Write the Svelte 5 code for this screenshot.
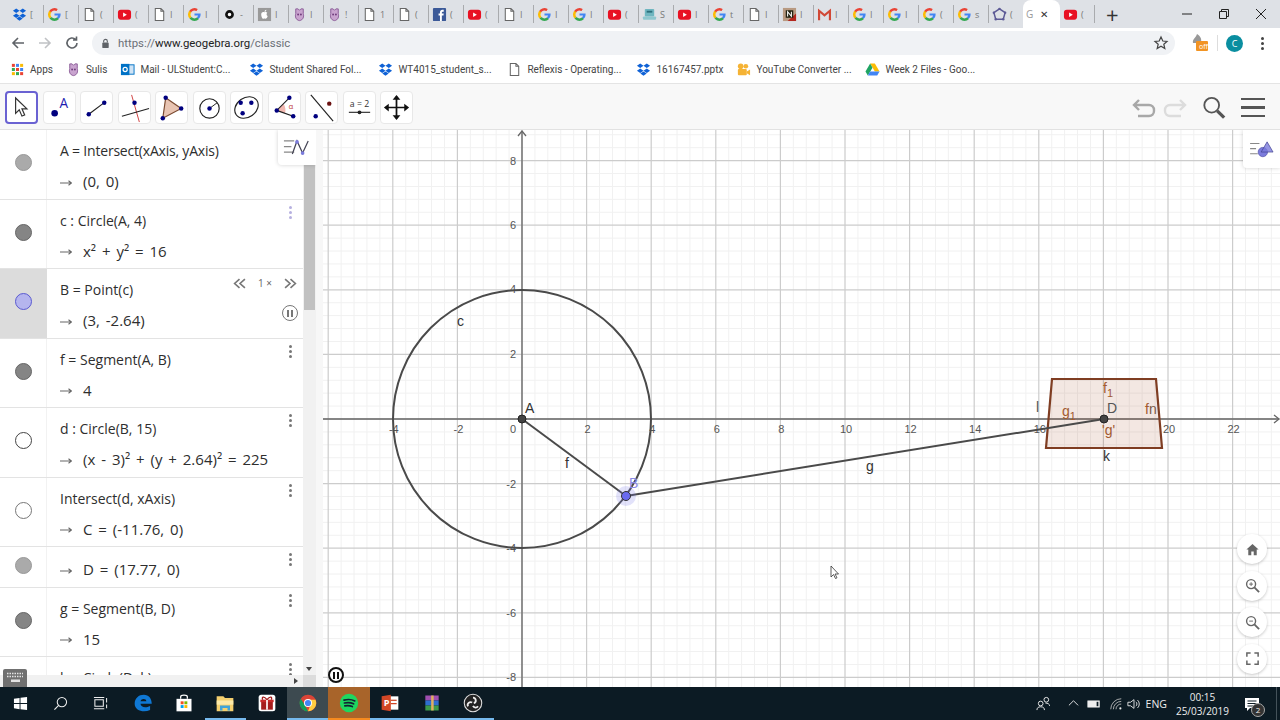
<script lang="ts">
	const tabs = [
		['dropbox', '['], ['g', '['], ['doc', '('], ['yt', '('], ['doc', 'I'], ['g', 'I'], ['dot', '-'], ['apple', 'I'],
		['sulis', 'I'], ['sulis', '!'], ['doc', '1'], ['doc', '('], ['fb', '('], ['yt', '('], ['doc', 'I'], ['g', 'I'],
		['g', 'I'], ['yt', '('], ['laptop', 'S'], ['yt', 'I'], ['g', 't'], ['doc', 'I'], ['notion', 'I'], ['gmail', 'I'],
		['g', 'I'], ['g', 'I'], ['g', '('], ['g', 's'], ['pent', '('], ['g', 'active'], ['yt', '(']
	];

	const bookmarks = [
		['apps', 'Apps'], ['sulis', 'Sulis'], ['outlook', 'Mail - ULStudent:C...'], ['dropbox', 'Student Shared Fol...'],
		['dropbox', 'WT4015_student_s...'], ['doc', 'Reflexis - Operating...'], ['dropbox', '16167457.pptx'],
		['film', 'YouTube Converter ...'], ['drive', 'Week 2 Files - Goo...']
	];

	const rows = [
		{ fill: '#aaa', line: '#999', def: 'A = Intersect(xAxis, yAxis)', val: '(0, 0)', menu: '', tight: true },
		{ fill: '#858585', line: '#666', def: 'c : Circle(A, 4)', val: 'x² + y² = 16', menu: 'soft' },
		{ fill: '#b5b5ee', line: '#5a5ad0', def: 'B = Point(c)', val: '(3, -2.64)', menu: 'play', on: true },
		{ fill: '#858585', line: '#666', def: 'f = Segment(A, B)', val: '4', menu: 'dark' },
		{ fill: '#fff', line: '#444', def: 'd : Circle(B, 15)', val: '(x - 3)² + (y + 2.64)² = 225', menu: 'dark' },
		{ fill: '#fff', line: '#777', def: 'Intersect(d, xAxis)', val: 'C = (-11.76, 0)', menu: 'dark' },
		{ fill: '#aaa', line: '#999', val: 'D = (17.77, 0)', menu: 'dark', short: true },
		{ fill: '#858585', line: '#666', def: 'g = Segment(B, D)', val: '15', menu: 'dark' },
		{ fill: '#fff', line: '#999', def: 'k = Circle(D, k)', val: '', menu: 'dark' }
	];

	const ox = 522;
	const oy = 419;
	const step = 64.6;
	const minor = step / 5;
	const range = (a: number, b: number) => Array.from({ length: b - a + 1 }, (_, i) => a + i);
	const xLabels = [-4, -2, 2, 4, 6, 8, 10, 12, 14, 16, 20, 22];
	const yLabels = [8, 6, 2, -2, -4, -6, -8];
	const taskApps = ['edge', 'store', 'folder', 'gift', 'chrome', 'spotify', 'ppt', 'rar', 'obs'];
</script>

{#snippet favicon(kind: string)}
	<svg class="fav" viewBox="0 0 16 16">
		{#if kind === 'dropbox'}
			<path fill="#0f62d6" d="M4.5 1.5 8 4 4.5 6.5 1 4ZM11.5 1.5 15 4l-3.5 2.5L8 4ZM4.5 6.8 8 9.3l-3.500 2.400L1 9.300ZM11.500 6.800 15 9.300l-3.500 2.400L8 9.300ZM4.600 12.300 8 10l3.400 2.300L8 14.600Z" />
		{:else if kind === 'g'}
			<circle cx="8" cy="8" r="5.500" fill="none" stroke="#ea4335" stroke-width="2.600" stroke-dasharray="9 40" transform="rotate(205 8 8)" />
			<circle cx="8" cy="8" r="5.500" fill="none" stroke="#fbbc05" stroke-width="2.600" stroke-dasharray="7 40" transform="rotate(140 8 8)" />
			<circle cx="8" cy="8" r="5.500" fill="none" stroke="#34a853" stroke-width="2.600" stroke-dasharray="9 40" transform="rotate(45 8 8)" />
			<path fill="#4285f4" d="M8 6.800h6.500c.2 2.500-.6 4.500-2.300 5.800L10.500 11c.8-.6 1.200-1.200 1.300-2H8Z" />
		{:else if kind === 'doc'}
			<path fill="#fff" stroke="#666" stroke-width="1.100" d="M3.500 1.500h6l3 3v10h-9ZM9.500 1.500v3h3" />
		{:else if kind === 'yt'}
			<rect x="1" y="3" width="14" height="10.500" rx="3" fill="#e81123" />
			<path fill="#fff" d="m6.500 5.800 4 2.400-4 2.400Z" />
		{:else if kind === 'dot'}
			<circle cx="8" cy="8" r="3.300" fill="#fff" stroke="#111" stroke-width="2.800" />
		{:else if kind === 'apple'}
			<rect x="1" y="1" width="14" height="14" fill="#999" />
			<path fill="#fff" d="M5 6c1-1 2-.8 3-.4 1-.4 2-.6 3 .4-1.200 1-1 3 .4 3.700-.6 2-1.600 3-2.400 2.800-.6-.2-1.400-.2-2 0C5.500 12.800 3.600 8 5 6ZM8 5c0-1.200.8-2 2-2.200C10 4 9.200 5 8 5Z" />
		{:else if kind === 'sulis'}
			<path fill="#c9a4cf" stroke="#8a5a96" d="M4 2h2.500L8 3.500 9.500 2H12v5c1 3 0 7-4 7.500C4 14 3 10 4 7Z" />
			<circle cx="6.500" cy="8" r="1" fill="#6d3a7a" /><circle cx="9.500" cy="8" r="1" fill="#6d3a7a" />
		{:else if kind === 'fb'}
			<rect x="1" y="1" width="14" height="14" rx="1" fill="#3b5998" />
			<path fill="#fff" d="M8.500 15V9H7V7h1.500V5.500C8.500 4 9.500 3 11 3h1.500v2H11.300c-.5 0-.8.300-.8.800V7h2l-.3 2h-1.700v6Z" />
		{:else if kind === 'laptop'}
			<rect x="3" y="2" width="10" height="8" rx="1" fill="#6fb6c0" /><rect x="1" y="10" width="14" height="3.500" rx="1" fill="#8fc7cf" /><rect x="5" y="4" width="6" height="2" fill="#2c6f7c" />
		{:else if kind === 'notion'}
			<rect x="1" y="1" width="14" height="14" fill="#b89a82" /><path fill="#b3261e" d="M6 15 15 7v8Z" /><rect x="4" y="3.500" width="8" height="8" fill="#221" /><path stroke="#fff" stroke-width="1.100" fill="none" d="M6 10V5l4 5V5" />
		{:else if kind === 'gmail'}
			<path fill="none" stroke="#d14836" stroke-width="2.300" d="M2.200 14V4L8 8.800 13.800 4v10" />
		{:else if kind === 'pent'}
			<path fill="none" stroke="#5c5a96" stroke-width="1.600" d="M8 2 14 6 12 13H4L2 6Z" /><g fill="#5c5a96"><circle cx="8" cy="2" r="1.300" /><circle cx="14" cy="6" r="1.300" /><circle cx="12" cy="13" r="1.300" /><circle cx="4" cy="13" r="1.300" /><circle cx="2" cy="6" r="1.300" /></g>
		{:else if kind === 'apps'}
			<g>
				<rect x="2" y="2" width="3.200" height="3.200" fill="#ea4335" /><rect x="6.400" y="2" width="3.200" height="3.200" fill="#4285f4" /><rect x="10.800" y="2" width="3.200" height="3.200" fill="#fbbc05" />
				<rect x="2" y="6.400" width="3.200" height="3.200" fill="#34a853" /><rect x="6.400" y="6.400" width="3.200" height="3.200" fill="#ea4335" /><rect x="10.800" y="6.400" width="3.200" height="3.200" fill="#4285f4" />
				<rect x="2" y="10.800" width="3.200" height="3.200" fill="#fbbc05" /><rect x="6.400" y="10.800" width="3.200" height="3.200" fill="#34a853" /><rect x="10.800" y="10.800" width="3.200" height="3.200" fill="#ea4335" />
			</g>
		{:else if kind === 'outlook'}
			<rect x="6" y="3" width="9" height="10" fill="#cfe3f5" stroke="#0072c6" /><rect x="1" y="2" width="9" height="12" fill="#0072c6" /><circle cx="5.500" cy="8" r="2.200" fill="none" stroke="#fff" stroke-width="1.300" />
		{:else if kind === 'film'}
			<circle cx="5" cy="4.500" r="3" fill="#f5b335" /><circle cx="10.500" cy="4.500" r="2.500" fill="#f5b335" /><rect x="2" y="7.500" width="9.500" height="6.500" rx="1" fill="#f5b335" /><path fill="#f5b335" d="m11.500 10 3.500-2v6l-3.500-2Z" />
		{:else if kind === 'drive'}
			<path fill="#fbbc05" d="M5.500 1.500h5l5 8.500h-5Z" /><path fill="#1fa463" d="M5.500 1.500 0.500 10 3 14.500 8 6Z" /><path fill="#4285f4" d="M3 14.500h10l2.500-4.500H5.500Z" />
		{/if}
	</svg>
{/snippet}

{#snippet taskIcon(kind: string)}
	<svg class="task-icon" viewBox="0 0 24 24">
		{#if kind === 'edge'}
			<path fill="#0f78d4" d="M2 13C2 6 7 2 13 2c6 0 9.500 4.500 9.500 11H9c.3 4 6 5.500 11.500 2.500v5C13 24 2 21.500 2 13Zm7-3h7c0-3.500-6-4-7 0Z" />
		{:else if kind === 'store'}
			<path fill="none" stroke="#fff" stroke-width="1.500" d="M8 7V4.500C8 2 16 2 16 4.500V7" />
			<path fill="#fff" d="M3 7h18v15H3Z" />
			<rect x="8" y="10" width="3.500" height="3.500" fill="#f25022" /><rect x="12.500" y="10" width="3.500" height="3.500" fill="#7fba00" /><rect x="8" y="14.500" width="3.500" height="3.500" fill="#00a4ef" /><rect x="12.500" y="14.500" width="3.500" height="3.500" fill="#ffb900" />
		{:else if kind === 'folder'}
			<path fill="#f5d06f" d="M2 4h8l2 2h10v16H2Z" /><rect x="2" y="9" width="20" height="5" fill="#fce9a8" /><path fill="#3fa3d9" d="M6 21v-6h12v6h-3v-3H9v3Z" />
		{:else if kind === 'gift'}
			<rect x="2" y="2" width="20" height="20" rx="3" fill="#fff" /><rect x="5" y="9" width="14" height="11" fill="#a51c1c" /><rect x="4" y="8" width="16" height="3" fill="#c62828" /><rect x="11" y="8" width="2" height="12" fill="#fff" /><path fill="none" stroke="#a51c1c" stroke-width="1.500" d="M12 8C8 3 5 5 7 8M12 8c4-5 7-3 5 0" />
		{:else if kind === 'chrome'}
			<circle cx="12" cy="12" r="10" fill="#db4437" /><path fill="#0f9d58" d="M12 22A10 10 0 0 1 3.300 7L8 14l4 8Z" /><path fill="#ffcd40" d="M12 22A10 10 0 0 0 21 8H12l3 6Z" /><circle cx="12" cy="12" r="4.800" fill="#fff" /><circle cx="12" cy="12" r="3.700" fill="#4285f4" />
		{:else if kind === 'spotify'}
			<circle cx="12" cy="12" r="11" fill="#1ed760" /><path fill="none" stroke="#123" stroke-width="2" stroke-linecap="round" d="M6 8.500c4-1 9-1 13 1M6.500 12c3.500-.8 7.500-.7 11 1M7 15.500c3-.6 6-.5 9 .8" />
		{:else if kind === 'ppt'}
			<rect x="10" y="4" width="12" height="16" fill="#fff" /><rect x="13" y="8" width="7" height="1.500" fill="#d24726" /><rect x="13" y="12" width="7" height="1.500" fill="#d24726" /><path fill="#d24726" d="M2 4 13 2v20L2 20Z" /><text x="4.500" y="16" class="ppt-letter">P</text>
		{:else if kind === 'rar'}
			<rect x="4" y="3" width="16" height="6" fill="#a04fb0" /><rect x="4" y="9" width="16" height="6" fill="#2f6fd0" /><rect x="4" y="15" width="16" height="6" fill="#3c9a4a" /><rect x="11" y="3" width="3" height="18" fill="#e0b060" />
		{:else if kind === 'obs'}
			<circle cx="12" cy="12" r="10.500" fill="#222" stroke="#ddd" stroke-width="1.300" /><path fill="none" stroke="#eee" stroke-width="2.200" d="M12 5.500a3.500 3.500 0 0 1 1 6.800M6 16a3.500 3.500 0 0 1 5-4.500M18 16a3.500 3.500 0 0 1-6-.5" />
		{/if}
	</svg>
{/snippet}

<div class="screen">
	<div class="tabstrip">
		{#each tabs as [kind, letter]}
			{#if letter === 'active'}
				<div class="tab active">
					<span class="active-g">G</span>
					<span class="close">✕</span>
				</div>
			{:else}
				<div class="tab">
					{@render favicon(kind)}
					<span class="tab-title">{letter}</span>
				</div>
			{/if}
		{/each}
		<span class="newtab">+</span>
		<div class="winctl">
			<svg viewBox="0 0 12 12"><path d="M1 6h10" stroke="#222" /></svg>
			<svg viewBox="0 0 12 12"><path d="M1.500 3.500h7v7h-7ZM3.500 3.500v-2h7v7h-2" fill="none" stroke="#222" /></svg>
			<svg viewBox="0 0 12 12"><path d="m1 1 10 10M11 1 1 11" stroke="#222" /></svg>
		</div>
	</div>

	<div class="addressbar">
		<svg class="nav" viewBox="0 0 16 16"><path d="M14 8H3M8 3 3 8l5 5" fill="none" stroke="#5f6368" stroke-width="1.600" /></svg>
		<svg class="nav" viewBox="0 0 16 16"><path d="M2 8h11M8 3l5 5-5 5" fill="none" stroke="#c0c2c5" stroke-width="1.600" /></svg>
		<svg class="nav" viewBox="0 0 16 16"><path d="M13 8a5 5 0 1 1-1.500-3.600M12.500 1.500v3.500H9" fill="none" stroke="#5f6368" stroke-width="1.600" /></svg>
		<div class="omnibox">
			<svg class="lock" viewBox="0 0 12 12"><path d="M4 5V3.500a2 2 0 0 1 4 0V5" fill="none" stroke="#5f6368" stroke-width="1.200" /><rect x="2.500" y="5" width="7" height="6" rx="1" fill="#5f6368" /></svg>
			<span class="url"><span class="dim">https://</span>www.geogebra.org<span class="dim">/classic</span></span>
			<svg class="star" viewBox="0 0 16 16"><path d="m8 2 1.800 4 4.200.4-3.200 2.800 1 4.300L8 11.200l-3.800 2.300 1-4.300L2 6.400 6.200 6Z" fill="none" stroke="#444" stroke-width="1.200" /></svg>
		</div>
		<div class="ext">
			<svg viewBox="0 0 18 18"><path d="M7 1c3 2 5 4 4 9H3C2 6 6 5 7 1Z" fill="#999" /><rect x="6" y="8" width="12" height="10" rx="1" fill="#f29423" /></svg>
			<span class="off">off</span>
		</div>
		<span class="sep"></span>
		<span class="avatar">C</span>
		<span class="kebab"><i></i><i></i><i></i></span>
	</div>

	<div class="bookmarks">
		{#each bookmarks as [kind, label]}
			<div class="bookmark" class:long={label.endsWith('...')}>
				{@render favicon(kind)}
				<span>{label}</span>
			</div>
		{/each}
	</div>

	<div class="toolbar">
		<div class="tools">
			<button class="tool selected" aria-label="Move">
				<svg viewBox="0 0 32 32"><path d="M9.500 5.500v17l4-4 3 7 3-1.200-3-6.800H22Z" fill="#fff" stroke="#333" stroke-width="1.300" /></svg>
			</button>
			<button class="tool" aria-label="Point">
				<svg viewBox="0 0 32 32"><circle cx="11" cy="22" r="3.400" fill="#00007f" /><text x="16" y="16" class="blue-a">A</text></svg>
			</button>
			<button class="tool" aria-label="Line">
				<svg viewBox="0 0 32 32"><path d="M8 23 24 11" stroke="#222" stroke-width="1.200" /><circle cx="8" cy="23" r="2.300" fill="#00007f" /><circle cx="24" cy="11" r="2.300" fill="#00007f" /></svg>
			</button>
			<button class="tool" aria-label="Perpendicular">
				<svg viewBox="0 0 32 32"><path d="M13 3 21 31" stroke="#d04040" stroke-width="1" /><path d="M3 25 31 17" stroke="#222" stroke-width="1.100" /><circle cx="16" cy="11" r="2.300" fill="#00007f" /></svg>
			</button>
			<button class="tool" aria-label="Polygon">
				<svg viewBox="0 0 32 32"><path d="M10 6 26 17 7 27Z" fill="#e8c4b2" stroke="#7a4a30" stroke-width="1.200" /><circle cx="10" cy="6" r="2.300" fill="#00007f" /><circle cx="26" cy="17" r="2.300" fill="#00007f" /><circle cx="7" cy="27" r="2.300" fill="#00007f" /></svg>
			</button>
			<button class="tool" aria-label="Circle">
				<svg viewBox="0 0 32 32"><circle cx="16" cy="17" r="10" fill="none" stroke="#222" stroke-width="1.200" /><path d="M16 17 24 11" stroke="#222" /><circle cx="16" cy="17" r="2.300" fill="#00007f" /></svg>
			</button>
			<button class="tool" aria-label="Ellipse">
				<svg viewBox="0 0 32 32"><ellipse cx="16" cy="16" rx="13" ry="10" fill="none" stroke="#222" stroke-width="1.200" transform="rotate(-35 16 16)" /><circle cx="10" cy="11" r="2.300" fill="#00007f" /><circle cx="21" cy="11" r="2.300" fill="#00007f" /><circle cx="12" cy="22" r="2.300" fill="#00007f" /></svg>
			</button>
			<button class="tool" aria-label="Angle">
				<svg viewBox="0 0 32 32"><path d="M8 19 15 12C17 15 17.500 19 16.500 22Z" fill="#f2b8b0" /><path d="M21 6 8 19l17 6" fill="none" stroke="#222" stroke-width="1.200" /><circle cx="21" cy="6" r="2.300" fill="#00007f" /><circle cx="8" cy="19" r="2.300" fill="#00007f" /><circle cx="25" cy="25" r="2.300" fill="#00007f" /><text x="20" y="18" class="alpha">α</text></svg>
			</button>
			<button class="tool" aria-label="Reflect">
				<svg viewBox="0 0 32 32"><path d="M5 3 28 30" stroke="#222" stroke-width="1.200" /><circle cx="10" cy="25" r="2.300" fill="#00007f" /><circle cx="24" cy="12" r="2.300" fill="#6b1212" /></svg>
			</button>
			<button class="tool" aria-label="Slider">
				<svg viewBox="0 0 32 32"><text x="16" y="15" class="slider-text">a = 2</text><path d="M5 21h22" stroke="#444" stroke-width="1.300" /><circle cx="16" cy="21" r="2" fill="#222" /></svg>
			</button>
			<button class="tool" aria-label="Move view">
				<svg viewBox="0 0 32 32"><path d="M16 5v22M5 16h22" stroke="#111" stroke-width="1.800" /><path d="m16 3 4 5h-8ZM16 29l4-5h-8ZM3 16l5-4v8ZM29 16l-5-4v8Z" fill="#111" /></svg>
			</button>
		</div>
		<div class="actions">
			<svg viewBox="0 0 26 24" class="act"><path d="M7 4 2 9l5 5M3 9h14a5 5 0 0 1 5 5v1a5 5 0 0 1-5 5H6" fill="none" stroke="#a8a8a8" stroke-width="2.400" /></svg>
			<svg viewBox="0 0 26 24" class="act"><path d="m19 4 5 5-5 5M23 9H9a5 5 0 0 0-5 5v1a5 5 0 0 0 5 5h11" fill="none" stroke="#dcdcdc" stroke-width="2.400" /></svg>
			<svg viewBox="0 0 26 26" class="act search"><circle cx="10.500" cy="10" r="8" fill="none" stroke="#555" stroke-width="2" /><path d="m16.500 16 7.500 7.500" stroke="#555" stroke-width="3.500" /></svg>
			<div class="burger"><i></i><i></i><i></i></div>
		</div>
	</div>

	<div class="workspace">
		<aside class="algebra">
			<div class="list">
				{#each rows as row}
					<div class="row" class:short={row.short} class:on={row.on}>
						<div class="marker"><span class="marble" style:background={row.fill} style:border-color={row.line}></span></div>
						<div class="content">
							{#if row.def}<div class="line" class:tight={row.tight}>{row.def}</div>{/if}
							{#if row.val}
								<div class="line result">
									<svg class="arrow" viewBox="0 0 12 6"><path d="M0 3h11M8.500 .8 11.500 3 8.500 5.200" fill="none" stroke="#666" stroke-width="1.100" /></svg>
									<span>{row.val}</span>
								</div>
							{/if}
						</div>
						{#if row.menu === 'play'}
							<div class="speed">
								<svg class="chev" viewBox="0 0 12 10"><path d="M6 1 1.500 5 6 9M11 1 6.500 5 11 9" fill="none" stroke="#777" stroke-width="1.500" /></svg>
								<span class="rate">1 ×</span>
								<svg class="chev" viewBox="0 0 12 10"><path d="m1 1 4.500 4L1 9M6 1l4.500 4L6 9" fill="none" stroke="#777" stroke-width="1.500" /></svg>
							</div>
							<span class="pause-small"><i></i><i></i></span>
						{:else if row.menu}
							<span class="dots" class:soft={row.menu === 'soft'}><i></i><i></i><i></i></span>
						{/if}
					</div>
				{/each}
			</div>
			<div class="vscroll"><div class="thumb"></div><span class="down"></span></div>
			<div class="hscroll"><span class="right"></span></div>
			<div class="corner"></div>
			<div class="keyboard">
				<svg viewBox="0 0 24 18"><path d="M4 4.500h16M4 7.500h16" stroke="#e4e4e4" stroke-width="1.500" stroke-dasharray="1.500 1" /><rect x="8" y="10.500" width="9" height="2.500" fill="#e4e4e4" /></svg>
			</div>
			<button class="style-btn" aria-label="Algebra style">
				<svg viewBox="0 0 30 20"><path d="M1 3h11M1 9h8M1 15h11" stroke="#888" stroke-width="1.300" /><path d="M10 17 15 3 21 16 27 3" fill="none" stroke="#445" stroke-width="1.300" /><circle cx="15" cy="4" r="2" fill="#7b7bdc" /><circle cx="21" cy="16" r="2" fill="#7b7bdc" /></svg>
			</button>
		</aside>
		<div class="splitter"></div>

		<main class="graphics">
			<svg class="plot" viewBox="323 130 957 557">
				{#each range(-15, 59) as i}
					{#if i % 5 !== 0}<line x1={ox + i * minor} y1="130" x2={ox + i * minor} y2="687" class="minor" />{/if}
				{/each}
				{#each range(-22, 22) as i}
					{#if i % 5 !== 0}<line x1="323" y1={oy + i * minor} x2="1280" y2={oy + i * minor} class="minor" />{/if}
				{/each}
				{#each range(-3, 11) as i}
					<line x1={ox + i * step} y1="130" x2={ox + i * step} y2="687" class="major" />
				{/each}
				{#each range(-4, 4) as i}
					<line x1="323" y1={oy + i * step} x2="1280" y2={oy + i * step} class="major" />
				{/each}

				<path d="M323 419H1279M522 687V132" class="axis" />
				<path d="m1274 415 5 4-5 4M518 136l4-5 4 5" class="axis" />

				{#each xLabels as n}
					<text x={ox + 1 + n * 32.3} y="433" class="tick" text-anchor="middle">{n}</text>
				{/each}
				<text x="513" y="433" class="tick" text-anchor="middle">0</text>
				{#each yLabels as n}
					<text x="516" y={oy - n * 32.3 + 4} class="tick" text-anchor="end">{n}</text>
				{/each}
				<text x="516" y="293" class="tick" text-anchor="end">4</text>

				<polygon points="1052,379 1156,379 1162,448 1046,448" class="poly" />
				<circle cx="522" cy="419" r="129" class="obj" />
				<line x1="522" y1="419" x2="626" y2="496" class="obj" />
				<line x1="626" y1="496" x2="1104" y2="419" class="obj" />

				<circle cx="626" cy="496" r="10" fill="#7c7ce8" fill-opacity="0.22" />
				<circle cx="626" cy="496" r="4.500" fill="#6a6af0" stroke="#333" stroke-width="1" />
				<circle cx="522" cy="419" r="4" fill="#444" stroke="#222" />
				<circle cx="1104" cy="419" r="4" fill="#444" stroke="#222" />

				<text x="525" y="413" class="name">A</text>
				<text x="629" y="488" class="name violet">B</text>
				<text x="457" y="326" class="name">c</text>
				<text x="565" y="468" class="name">f</text>
				<text x="866" y="471" class="name">g</text>
				<text x="1107" y="413" class="name grey">D</text>
				<text x="1036" y="412" class="name grey">l</text>
				<text x="1103" y="461" class="name">k</text>
				<text x="1103" y="393" class="name brown">f<tspan dy="4" font-size="11">1</tspan></text>
				<text x="1062" y="416" class="name brown">g<tspan dy="4" font-size="11">1</tspan></text>
				<text x="1145" y="414" class="name brown">f<tspan class="grey-span">n</tspan></text>
				<text x="1102" y="435" class="name brown">'g'</text>

				<path d="M831 566v11l2.500-2.500 2 4 1.500-.7-2-3.800h3.500Z" fill="#fff" stroke="#333" stroke-width="0.800" />
			</svg>

			<span class="pause"><i></i><i></i></span>

			<button class="style-btn right-style" aria-label="Graphics style">
				<svg viewBox="0 0 28 20"><path d="M0 3h11M0 9h7M0 15h9" stroke="#888" stroke-width="1.300" /><circle cx="15" cy="13" r="5.500" fill="#7b7bdc" stroke="#4f4fa8" stroke-width="0.800" /><path d="m20 1 7 12H13Z" fill="#7b7bdc" fill-opacity="0.8" stroke="#3f3f8f" stroke-width="0.800" /></svg>
			</button>

			<div class="zoom-panel">
				<button class="round" aria-label="Home">
					<svg viewBox="0 0 16 16"><path d="M8 2 1.500 8H3.500v6h3.200v-4h2.600v4h3.200V8h2Z" fill="#666" /></svg>
				</button>
				<button class="round" aria-label="Zoom in">
					<svg viewBox="0 0 16 16"><circle cx="6.500" cy="6.500" r="4.800" fill="none" stroke="#666" stroke-width="1.500" /><path d="m10 10 5 5" stroke="#666" stroke-width="2" /><path d="M4.500 6.500h4M6.500 4.500v4" stroke="#666" /></svg>
				</button>
				<button class="round" aria-label="Zoom out">
					<svg viewBox="0 0 16 16"><circle cx="6.500" cy="6.500" r="4.800" fill="none" stroke="#666" stroke-width="1.500" /><path d="m10 10 5 5" stroke="#666" stroke-width="2" /><path d="M4.500 6.500h4" stroke="#666" /></svg>
				</button>
				<button class="round" aria-label="Fullscreen">
					<svg viewBox="0 0 16 16"><path d="M2 6V2h4M10 2h4v4M14 10v4h-4M6 14H2v-4" fill="none" stroke="#666" stroke-width="1.600" /></svg>
				</button>
			</div>
		</main>
	</div>

	<footer class="taskbar">
		<svg class="start" viewBox="0 0 16 16"><path fill="#fff" d="M1 3 7 2v5.500H1ZM8 1.800 15 1v6.500H8ZM1 8.500h6V14l-6-.9ZM8 8.500h7V15l-7-1Z" /></svg>
		<svg class="quick" viewBox="0 0 16 16"><circle cx="9.500" cy="6.500" r="5" fill="none" stroke="#eee" stroke-width="1.100" /><path d="M6 10 1.500 14.500" stroke="#eee" stroke-width="1.200" /></svg>
		<svg class="quick" viewBox="0 0 16 16"><path d="M2 4h9v7H2ZM1 1.500h11M1 13.500h11M14.500 2v5M14.500 9v4" fill="none" stroke="#eee" stroke-width="1.100" /></svg>
		{#each taskApps as app}
			<div class="app {app}">
				{@render taskIcon(app)}
			</div>
		{/each}
		<div class="tray">
			<svg class="tray-icon people" viewBox="0 0 16 16"><circle cx="5" cy="8" r="2.500" fill="none" stroke="#eee" /><circle cx="11" cy="4" r="2.500" fill="none" stroke="#eee" /><path d="M1 15c0-2 1-3.500 4-3.500S9 13 9 15M10 7.500c2.500 0 4.500 1 4.500 3" fill="none" stroke="#eee" /></svg>
			<svg class="tray-icon chevron" viewBox="0 0 12 12"><path d="m1 8 5-5 5 5" fill="none" stroke="#eee" /></svg>
			<svg class="tray-icon batt" viewBox="0 0 16 16"><rect x="1" y="4.500" width="13" height="7" fill="#eee" stroke="#eee" /><rect x="11" y="5.500" width="2" height="5" fill="#0c1b24" /></svg>
			<svg class="tray-icon wifi" viewBox="0 0 16 16"><path d="M2 14A12 12 0 0 1 14 2M5 14a9 9 0 0 1 9-9M8 14a6 6 0 0 1 6-6" fill="none" stroke="#bbb" /><circle cx="13" cy="13" r="1.200" fill="#eee" /></svg>
			<svg class="tray-icon vol" viewBox="0 0 16 16"><path d="M1 6h3l4-3v10l-4-3H1ZM10 5.500a3 3 0 0 1 0 5M12 3.500a6 6 0 0 1 0 9" fill="none" stroke="#eee" /></svg>
			<span class="lang">ENG</span>
			<div class="clock"><span>00:15</span><span>25/03/2019</span></div>
			<div class="notify">
				<svg viewBox="0 0 16 16"><path d="M1 2h14v10H6l-3 3v-3H1Z" fill="#fff" /><path d="M3.500 5h9M3.500 7.500h9M3.500 10h6" stroke="#0c1b24" /></svg>
				<span class="badge">2</span>
			</div>
			<span class="peek"></span>
		</div>
	</footer>
</div>

<style>
	:global(body) {
		margin: 0;
		overflow: hidden;
		background: #fff;
	}

	.screen {
		display: flex;
		flex-direction: column;
		width: 1280px;
		height: 720px;
		overflow: hidden;
		font-family: 'Open Sans', 'Noto Sans', sans-serif;
		color: #333;
	}

	button {
		padding: 0;
		border: 0;
		background: none;
		font: inherit;
	}

	svg {
		display: block;
	}

	/* chrome */
	.tabstrip {
		display: flex;
		flex: none;
		align-items: center;
		height: 28px;
		padding-left: 9px;
		background: #dee1e6;
	}

	.tab {
		display: flex;
		flex: none;
		align-items: center;
		gap: 3px;
		box-sizing: border-box;
		width: 35px;
		height: 18px;
		padding-left: 3px;
		border-right: 1px solid #a9abae;
		overflow: hidden;
	}

	.tab:has(+ .active) {
		border-right: 0;
	}

	.tab.active {
		gap: 7px;
		height: 28px;
		margin-left: -1px;
		width: 37px;
		padding-left: 3px;
		border-right: 0;
		border-radius: 8px 8px 0 0;
		background: #fff;
	}

	.fav {
		flex: none;
		width: 15px;
		height: 15px;
	}

	.active-g {
		font-size: 10px;
		color: #999;
	}

	.tab-title {
		font-size: 9px;
		color: #777;
	}

	.close {
		font-size: 10px;
		color: #333;
	}

	.newtab {
		margin-left: 11px;
		font-size: 22px;
		line-height: 1;
		font-weight: 400;
		color: #333;
	}

	.winctl {
		display: flex;
		gap: 25px;
		margin-left: auto;
		padding-right: 13px;
	}

	.winctl svg {
		width: 12px;
		height: 12px;
	}

	.addressbar {
		display: flex;
		flex: none;
		align-items: center;
		gap: 11px;
		box-sizing: border-box;
		height: 30px;
		padding: 0 16px 0 10px;
		background: #fff;
	}

	.nav {
		flex: none;
		width: 16px;
		height: 16px;
	}

	.omnibox {
		display: flex;
		flex: 1;
		align-items: center;
		box-sizing: border-box;
		height: 24px;
		margin-left: 1px;
		padding: 0 6px 0 8px;
		border-radius: 12px;
		background: #f0f2f5;
	}

	.lock {
		width: 11px;
		height: 11px;
		margin-right: 7px;
	}

	.url {
		font-family: Roboto, sans-serif;
		font-size: 11.400px;
		color: #222;
	}

	.dim {
		color: #6b6f75;
	}

	.star {
		width: 16px;
		height: 16px;
		margin-left: auto;
	}

	.ext {
		position: relative;
		width: 20px;
		height: 20px;
		margin-left: 4px;
	}

	.ext svg {
		width: 18px;
		height: 18px;
	}

	.off {
		position: absolute;
		right: 2px;
		bottom: 2px;
		font-size: 7px;
		line-height: 9px;
		color: #fff;
	}

	.sep {
		width: 1px;
		height: 16px;
		margin-left: -4px;
		background: #ddd;
	}

	.avatar {
		display: grid;
		width: 17px;
		height: 17px;
		place-items: center;
		border-radius: 50%;
		background: #0a8ea0;
		color: #fff;
		font-size: 9px;
		margin-left: -3px;
	}

	.kebab,
	.dots {
		display: flex;
		flex-direction: column;
		gap: 2px;
	}

	.kebab {
		margin-left: 7px;
	}

	.kebab i {
		width: 3px;
		height: 3px;
		border-radius: 50%;
		background: #444;
	}

	.bookmarks {
		display: flex;
		flex: none;
		align-items: center;
		gap: 13px;
		box-sizing: border-box;
		height: 26px;
		padding: 0 0 2px 10px;
		border-bottom: 1px solid #e4e4e4;
		background: #fff;
	}

	.bookmark {
		display: flex;
		align-items: center;
		gap: 5px;
		font-family: Roboto, sans-serif;
		font-size: 10px;
		color: #444;
		white-space: nowrap;
	}

	.bookmark.long {
		flex: 0 0 116px;
	}

	.bookmark .fav {
		width: 15px;
		height: 15px;
	}

	/* geogebra toolbar */
	.toolbar {
		display: flex;
		flex: none;
		align-items: center;
		justify-content: space-between;
		box-sizing: border-box;
		height: 46px;
		padding: 2px 15px 0 5px;
		border-bottom: 1px solid #e2e2e2;
		background: #f8f8f8;
	}

	.tools {
		display: flex;
		gap: 4.500px;
	}

	.tool {
		box-sizing: border-box;
		width: 33px;
		height: 33px;
		border: 1px solid #e8e8e8;
		border-radius: 4px;
		background: #fff;
	}

	.tool.selected {
		border: 2px solid #6a62d2;
	}

	.tool svg {
		width: 100%;
		height: 100%;
	}

	.blue-a {
		font-size: 14px;
		fill: #1c1cb0;
	}

	.alpha {
		font-size: 8px;
		fill: #c04040;
	}

	.slider-text {
		font-size: 9px;
		text-anchor: middle;
		fill: #333;
	}

	.ppt-letter {
		font-size: 11px;
		font-weight: 700;
		fill: #fff;
	}

	.actions {
		display: flex;
		align-items: center;
		gap: 3px;
	}

	.act {
		width: 26px;
		height: 24px;
	}

	.act.search {
		margin-left: 11px;
	}

	.burger {
		display: flex;
		flex-direction: column;
		gap: 6px;
		margin-left: 11px;
	}

	.burger i {
		width: 24px;
		height: 2.500px;
		background: #555;
	}

	/* workspace */
	.workspace {
		display: flex;
		flex: 1;
		min-height: 0;
	}

	.algebra {
		position: relative;
		flex: none;
		width: 316px;
		overflow: hidden;
		background: #fff;
	}

	.list {
		width: 303px;
		height: 545px;
		overflow: hidden;
	}

	.row {
		position: relative;
		display: flex;
		box-sizing: border-box;
		height: 69.500px;
		border-bottom: 1px solid #e3e3e3;
	}

	.row.short {
		height: 40.500px;
	}

	.marker {
		display: flex;
		flex: none;
		align-items: center;
		justify-content: center;
		box-sizing: border-box;
		width: 47px;
		padding-bottom: 3px;
		border-right: 1px solid #f2f2f2;
	}

	.row.on .marker {
		background: #dcdcdc;
		border-right: 0;
	}

	.marble {
		box-sizing: border-box;
		width: 17px;
		height: 17px;
		border: 1px solid;
		border-radius: 50%;
	}

	.content {
		padding: 5px 0 0 13px;
		font-size: 14px;
		color: #2e2e2e;
		white-space: nowrap;
	}

	.short .content {
		padding-top: 7px;
	}

	.line {
		height: 31px;
		line-height: 31px;
	}

	.line.tight {
		letter-spacing: -0.2px;
	}

	.result {
		display: flex;
		align-items: center;
		gap: 11px;
		font-size: 15px;
		word-spacing: 2px;
	}

	.arrow {
		width: 12px;
		height: 6px;
		margin-top: 2px;
	}

	.speed {
		position: absolute;
		top: 8px;
		left: 233px;
		display: flex;
		align-items: center;
		gap: 12px;
		color: #666;
	}

	.chev {
		width: 13px;
		height: 11px;
	}

	.rate {
		font-size: 10px;
		line-height: 12px;
	}

	.pause-small,
	.pause {
		position: absolute;
		display: flex;
		align-items: center;
		justify-content: center;
		gap: 2px;
		box-sizing: border-box;
		border-radius: 50%;
		background: #fff;
	}

	.pause-small {
		top: 36px;
		left: 282px;
		width: 16px;
		height: 16px;
		border: 1.500px solid #777;
	}

	.pause-small i {
		width: 2px;
		height: 7px;
		background: #777;
	}

	.dots {
		position: absolute;
		top: 6px;
		left: 289px;
	}

	.dots i {
		width: 3px;
		height: 3px;
		border-radius: 50%;
		background: #777;
	}

	.dots.soft i {
		background: #b6b0e0;
	}

	.vscroll {
		position: absolute;
		top: 0;
		left: 303px;
		bottom: 12px;
		width: 13px;
		background: #f1f1f1;
	}

	.thumb {
		height: 145px;
		margin: 35px 1px 0 1px;
		background: #c1c1c1;
	}

	.down {
		position: absolute;
		bottom: 4px;
		left: 3px;
		border: 3.500px solid transparent;
		border-top: 4px solid #444;
		border-bottom: 0;
	}

	.hscroll {
		position: absolute;
		left: 0;
		bottom: 0;
		width: 303px;
		height: 12px;
		background: #f1f1f1;
	}

	.right {
		position: absolute;
		top: 3px;
		right: 5px;
		border: 3.500px solid transparent;
		border-left: 4px solid #444;
		border-right: 0;
	}

	.corner {
		position: absolute;
		right: 0;
		bottom: 0;
		width: 13px;
		height: 12px;
		background: #dcdcdc;
	}

	.keyboard {
		position: absolute;
		left: 3px;
		bottom: 0;
		width: 24px;
		height: 18px;
		border-radius: 2px 2px 0 0;
		background: #707070;
	}

	.style-btn {
		position: absolute;
		top: 0;
		right: 0;
		display: grid;
		place-items: center;
		width: 38px;
		height: 35px;
		border-radius: 0 0 0 4px;
		background: #fff;
		box-shadow: 0 0 4px rgba(0, 0, 0, 0.18);
	}

	.style-btn svg {
		width: 28px;
		height: 19px;
	}

	.right-style {
		width: 37px;
		height: 38px;
	}

	.right-style svg {
		width: 24px;
		height: 17px;
	}

	.splitter {
		flex: none;
		width: 7px;
		background: #f7f7f7;
	}

	.graphics {
		position: relative;
		flex: 1;
		overflow: hidden;
		background: #fff;
	}

	.plot {
		position: absolute;
		inset: 0;
		width: 100%;
		height: 100%;
		font-family: 'Liberation Sans', sans-serif;
	}

	.minor {
		stroke: #f1f1f1;
		stroke-width: 1;
	}

	.major {
		stroke: #cccccc;
		stroke-width: 1.200;
	}

	.axis {
		fill: none;
		stroke: #666;
		stroke-width: 1.300;
	}

	.tick {
		font-size: 11px;
		fill: #555;
	}

	.name {
		font-size: 14px;
		fill: #333;
	}

	.violet {
		fill: #8a8ae6;
	}

	.grey {
		fill: #555;
	}

	.brown {
		fill: #a25a30;
	}

	.grey-span {
		fill: #7a5a48;
	}

	.poly {
		fill: rgba(153, 60, 20, 0.12);
		stroke: #7f3d22;
		stroke-width: 2.200;
	}

	.obj {
		fill: none;
		stroke: #4a4a4a;
		stroke-width: 2;
	}

	.pause {
		left: 5px;
		bottom: 4px;
		width: 16px;
		height: 16px;
		border: 2px solid #111;
	}

	.pause i {
		width: 2px;
		height: 7px;
		background: #111;
	}

	.zoom-panel {
		position: absolute;
		right: 13px;
		top: 404px;
		display: flex;
		flex-direction: column;
		gap: 6.500px;
	}

	.round {
		display: grid;
		width: 30px;
		height: 30px;
		place-items: center;
		border-radius: 50%;
		background: #fff;
		box-shadow: 0 1px 3px rgba(0, 0, 0, 0.22);
	}

	.round svg {
		width: 15px;
		height: 15px;
	}

	/* windows taskbar */
	.taskbar {
		display: flex;
		flex: none;
		align-items: center;
		height: 33px;
		background: #0c1b24;
		color: #eee;
	}

	.start {
		width: 15px;
		height: 15px;
		margin: 0 25px 0 13px;
	}

	.quick {
		width: 15px;
		height: 15px;
		margin-right: 25px;
	}

	.quick + .quick {
		margin-right: 14px;
	}

	.app {
		display: grid;
		flex: none;
		box-sizing: border-box;
		width: 41.300px;
		height: 33px;
		place-items: center;
		border-bottom: 2px solid transparent;
	}

	.task-icon {
		width: 20px;
		height: 20px;
	}

	.app.folder,
	.app.ppt,
	.app.rar,
	.app.obs {
		border-bottom-color: #76b9ed;
	}

	.app.chrome {
		background: #3d4a50;
		border-bottom-color: #76b9ed;
	}

	.app.spotify {
		background: #a8642a;
		border-bottom-color: #f58a1f;
	}

	.tray {
		display: flex;
		align-items: center;
		margin-left: auto;
		height: 100%;
	}

	.tray-icon {
		width: 14px;
		height: 14px;
	}

	.people {
		width: 15px;
		height: 15px;
		margin-right: 17px;
	}

	.chevron {
		width: 11px;
		height: 11px;
		margin-right: 8px;
	}

	.batt {
		margin-right: 8px;
	}

	.wifi {
		margin-right: 4px;
	}

	.vol {
		margin-right: 5px;
	}

	.lang {
		font-size: 10.500px;
	}

	.clock {
		display: flex;
		flex-direction: column;
		align-items: center;
		margin-left: 9px;
		font-size: 10px;
		line-height: 14px;
	}

	.notify {
		position: relative;
		width: 16px;
		height: 16px;
		margin-left: 15px;
	}

	.badge {
		position: absolute;
		top: 7px;
		left: 7px;
		display: grid;
		width: 12px;
		height: 12px;
		place-items: center;
		border: 1px solid #aaa;
		border-radius: 50%;
		background: #333;
		font-size: 8px;
	}

	.peek {
		width: 1px;
		height: 100%;
		margin-left: 16px;
		margin-right: 3px;
		background: #44525a;
	}
</style>
